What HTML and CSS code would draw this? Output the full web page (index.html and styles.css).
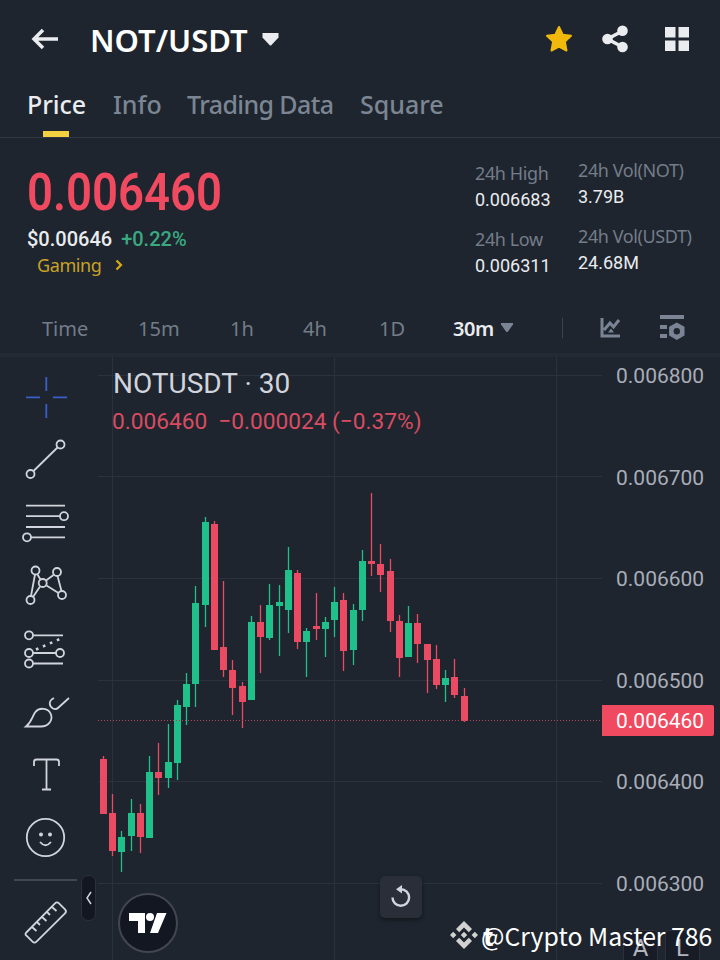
FILE: index.html
```html
<!DOCTYPE html>
<html lang="en">
<head>
  <meta charset="UTF-8">
  <meta name="viewport" content="width=device-width, initial-scale=1.0">
  <title>NOT/USDT</title>
  <link rel="stylesheet" href="styles.css">
</head>
<body>

  <header class="header">
    <svg class="back" width="28" height="22" viewBox="0 0 28 22"><path d="M12 2 3 11l9 9M3 11h24" /></svg>
    <h1 class="pair"><span class="fit">NOT/USDT</span></h1>
    <svg class="caret" width="17" height="13" viewBox="0 0 17 13"><path d="M.5 0h16v4.500L9.500 12q-1 1-2 0L.5 4.500z" /></svg>
    <div class="actions">
      <svg width="28" height="28" viewBox="0 0 28 28"><path class="star" d="m14 2 3.700 7.700 8.300 1.100-6.100 5.800 1.600 8.900-7.500-4-7.500 4 1.600-8.900L2 10.800l8.300-1.100z" /></svg>
      <svg width="28" height="28" viewBox="0 0 28 28"><path class="share-line" d="M21.500 6 6.500 14l15 8" /><g class="solid"><circle cx="6.500" cy="14" r="5.300" /><circle cx="21.500" cy="5.800" r="5.300" /><circle cx="21.500" cy="22" r="5.300" /></g></svg>
      <svg width="24" height="24" viewBox="0 0 24 24"><path class="solid" d="M0 0h10.500v10.500H0zM13.500 0H24v10.500H13.500zM0 13.500h10.500V24H0zM13.500 13.500H24V24H13.500z" /></svg>
    </div>
  </header>

  <nav class="tabs">
    <a class="tab active">Price</a>
    <a class="tab info">Info</a>
    <a class="tab data">Trading Data</a>
    <a class="tab square">Square</a>
  </nav>

  <section class="summary">
    <div class="quote">
      <div class="last"><span class="fit">0.006460</span></div>
      <div class="fiat"><span class="usd">$0.00646</span><span class="change">+0.22%</span></div>
      <div class="tag">Gaming
        <svg width="8" height="12" viewBox="0 0 8 12"><path d="m1.500 1.500 4.500 4.500-4.500 4.500" /></svg>
      </div>
    </div>
    <dl class="stats prices">
      <dt>24h High</dt>
      <dd>0.006683</dd>
      <dt>24h Low</dt>
      <dd>0.006311</dd>
    </dl>
    <dl class="stats volumes">
      <dt>24h Vol(NOT)</dt>
      <dd>3.79B</dd>
      <dt>24h Vol(USDT)</dt>
      <dd>24.68M</dd>
    </dl>
  </section>

  <div class="intervals">
    <span class="time">Time</span>
    <span class="m15">15m</span>
    <span class="h1">1h</span>
    <span class="h4">4h</span>
    <span class="d1">1D</span>
    <span class="m30">30m</span>
    <svg class="drop" width="12" height="10" viewBox="0 0 12 10"><path d="M0 0h12v1.500L7 8.500q-1 1-2 0L0 1.500z" /></svg>
    <i class="divider"></i>
    <svg class="indicator" width="20" height="20" viewBox="0 0 20 20"><path d="M2 0v18h18M4 12l6-7 3.500 4L19 2" /><path d="m8 14.500 3-4 3 4z" class="fill" /></svg>
    <svg class="settings" width="26" height="28" viewBox="0 0 26 28"><path class="fill" fill-rule="evenodd" d="M0 1h24v4H0zM0 11h7v4H0zM0 20h7v4H0zM16.800 8.500l7.700 4.300v8.800l-7.700 4.400-7.700-4.400v-8.800zM16.800 14a3.200 3.200 0 1 0 0 6.400 3.200 3.200 0 1 0 0-6.400z" /></svg>
  </div>

  <main class="chart">
    <aside class="tools">
      <svg class="cross" viewBox="0 366 98 63"><path d="M46.300 377v14M46.300 404v14M26 397.300h14M53 397.300h14" /></svg>
      <svg viewBox="0 429 98 63"><path d="m33.500 471 24-23.500" /><circle cx="30.500" cy="474" r="4" /><circle cx="60.500" cy="444.500" r="4" /></svg>
      <svg viewBox="0 492 98 63"><path d="M26 505.700h39M26 516.200h34M26 527h39M31 537.300h34" /><circle cx="64" cy="516.200" r="4" /><circle cx="27" cy="537.300" r="4" /></svg>
      <svg viewBox="0 555 98 63"><path d="m31 596 4-21.500M37.500 574.500l3 5M33 597l7-10.500M46 580.500l7.500-5.500M46.500 585.500l12 7.500M57.500 576l4 15" /><circle cx="35.500" cy="570.500" r="4" /><circle cx="57" cy="572" r="4" /><circle cx="42.700" cy="583" r="4" /><circle cx="62" cy="595" r="4" /><circle cx="30.500" cy="600" r="4" /></svg>
      <svg viewBox="0 618 98 63"><path d="M33 635.300h30M33 653h23M33 663.500h30" /><path class="dots" d="m36 649.500 25-11" /><circle cx="29" cy="635.300" r="4" /><circle cx="29" cy="653" r="4" /><circle cx="60" cy="653" r="4" /><circle cx="29" cy="663.500" r="4" /></svg>
      <svg viewBox="0 681 98 63"><path d="M26 726.500c5.500-4.500 6-9.500 9-14 4-5.500 13.500-5 16 2 2 6.500-3 12-10 12zM54 698c-6 3-5 8-1 10.500q3 1.500 5.500-1L69 698" /></svg>
      <svg viewBox="0 744 98 63"><path d="M34 766v-4q0-2.500 2.500-2.500h20q2.500 0 2.500 2.500v4M46.500 759.500v30M42 789.500h9" /></svg>
      <svg viewBox="0 807 98 63"><circle cx="45.500" cy="837.500" r="18.700" /><path d="M40 842q5.500 6.500 11 0" /><path class="fill" d="M39 834.500a2 2 0 1 0 4 0 2 2 0 1 0-4 0zM48 834.500a2 2 0 1 0 4 0 2 2 0 1 0-4 0z" /></svg>
      <hr>
      <svg viewBox="0 891 98 63"><path d="M26.300 932.500 55 903.300q2-2 4 0l6 6q2 2 0 4L36.500 941.700q-2 2-4 0l-6-6q-2-1.500-.2-3.200zM32 927l4.500 4M37 922l3 3M42 917l4.500 4M47 912l3 3M52 907l4.500 4" /></svg>
    </aside>

    <div class="plot">
      <svg viewBox="98 357 504 603">
        <path class="grid" d="M112.500 357v603M334.500 357v603M556.500 357v603M98 375.500h504M98 476.500h504M98 578.500h504M98 680.500h504M98 781.500h504M98 883.500h504" />
        <path class="wick down" d="M103.500 756V759M112.500 794V856M140.500 804V853M158.500 743V795M214.500 521V650M223.500 581V677M232.500 660V715M242.500 682V728M260.500 605V673M297.500 570V649M316.500 593V640M343.500 593V671M371.500 493V576M380.500 544V592M390.500 559V632M399.500 615V677M417.500 614V663M427.500 644V693M436.500 645V689M454.500 659V698M464.500 688V722" />
        <path class="wick up" d="M121.500 831V872M131.500 799V851M149.500 756V838M168.500 724V788M177.500 700V780M186.500 673V725M195.500 586V707M205.500 517V627M251.500 616V700M269.500 584V640M279.500 585V656M288.500 547V633M306.500 628V677M325.500 617V657M334.500 587V637M353.500 604V665M362.500 550V621M408.500 606V657M445.500 670V702" />
        <path class="body down" d="M103.500 759V814M112.500 813V851M140.500 813V837M158.500 772V778M214.500 524V650M223.500 647V670M232.500 670V688M242.500 686V702M260.500 622V637M297.500 573V642M316.500 626V629M343.500 600V651M371.500 561V564M380.500 564V575M390.500 571V621M399.500 621V658M417.500 623V644M427.500 644V660M436.500 659V685M454.500 677V695M464.500 696V721" />
        <path class="body up" d="M121.500 837V852M131.500 813V836M149.500 772V838M168.500 762V778M177.500 705V763M186.500 684V707M195.500 603V684M205.500 522V605M251.500 622V700M269.500 605V638M279.500 602V606M288.500 570V610M306.500 631V642M325.500 622V629M334.500 602V620M353.500 610V650M362.500 561V610M408.500 623V657M445.500 678V685" />
        <path class="last-line" d="M98 720.500h504" />
      </svg>
      <div class="legend">
        <div class="symbol">NOTUSDT · 30</div>
        <div class="move"><span>0.006460</span><span>−0.000024 (−0.37%)</span></div>
      </div>
    </div>

    <ul class="axis">
      <li>0.006800</li>
      <li>0.006700</li>
      <li>0.006600</li>
      <li>0.006500</li>
      <li>0.006400</li>
      <li>0.006300</li>
    </ul>
    <div class="price-tag">0.006460</div>

    <div class="collapse"><svg width="6" height="14" viewBox="0 0 6 14"><path d="M5 1 1 7l4 6" /></svg></div>
    <div class="logo"><svg width="40" height="22" viewBox="0 0 40 22"><path d="M1 1h16v20h-7V9H1zM29 1h9.500L30 21h-8z" /><circle cx="22" cy="5" r="4" /></svg></div>
    <div class="reset"><svg width="22" height="24" viewBox="0 0 22 24"><path d="M2.500 12.500a8.300 8.300 0 1 0 8.300-8.300" /><path class="fill" d="M12 0v8.500L6 4.200z" /></svg></div>
    <div class="scale"><span>A</span><span>L</span></div>
    <div class="watermark">
      <svg width="28" height="28" viewBox="0 0 28 28"><path d="M14 0l8 8-3.200 3.200L14 6.400l-4.800 4.800L6 8zM14 28l8-8-3.200-3.200-4.800 4.800-4.800-4.800L6 20zM14 10.800l3.200 3.200-3.200 3.200-3.200-3.200zM3.200 10.800 6.400 14l-3.200 3.200L0 14zM24.800 10.800 28 14l-3.200 3.200-3.200-3.200z" /></svg>
      <span class="mark">t</span>
      <span class="handle">@Crypto Master 786</span>
    </div>
  </main>

</body>
</html>
```
FILE: styles.css
```css
* {
  box-sizing: border-box;
}

body {
  margin: 0;
  width: 720px;
  height: 960px;
  overflow: hidden;
  display: flex;
  flex-direction: column;
  background-color: #1e252e;
  color: #eaecef;
  font-family: "Noto Sans", sans-serif;
}

svg {
  display: block;
  flex: none;
  fill: none;
}

.fit {
  display: inline-block;
  transform-origin: left center;
}

.header,
.tabs,
.summary,
.intervals,
.chart {
  flex: none;
}

.header {
  height: 78px;
  display: flex;
  align-items: center;
  padding: 0 31px;
}

.back {
  stroke: #eaecef;
  stroke-width: 3.5;
}

.pair {
  margin: 1px 0 0 31px;
  width: 172px;
  font-size: 31px;
  font-weight: 600;
  white-space: nowrap;
  color: #fff;
}

.caret,
.solid {
  fill: #eaecef;
}

.actions {
  margin-left: auto;
  display: flex;
  align-items: center;
}

.actions svg + svg {
  margin-left: 28px;
}

.actions svg:last-child {
  margin-left: 36px;
}

.star {
  fill: #f0b90b;
  stroke: #f0b90b;
  stroke-width: 2;
  stroke-linejoin: round;
}

.share-line {
  stroke: #eaecef;
  stroke-width: 3.5;
}

.tabs {
  height: 60px;
  display: flex;
  padding-left: 27px;
  border-bottom: 1px solid #323842;
  font-size: 25px;
  font-weight: 500;
  line-height: 53px;
  white-space: nowrap;
}

.tab {
  position: relative;
  color: #7c8593;
}

.tab.active {
  width: 86px;
  color: #eaecef;
}

.tab.info {
  width: 74px;
}

.tab.data {
  width: 173px;
  letter-spacing: -0.6px;
}

.tab.active::after {
  content: "";
  position: absolute;
  left: 16px;
  bottom: 0;
  width: 26px;
  height: 6px;
  background-color: #f2d03f;
}

.summary {
  height: 162px;
  display: flex;
  padding-left: 27px;
}

.quote {
  width: 448px;
  padding-top: 25px;
}

.last {
  height: 60px;
  font: 600 51px/60px Roboto, sans-serif;
  color: #f04a60;
}

.last .fit {
  transform: scaleX(0.893);
}

.fiat {
  display: flex;
  gap: 9px;
  font: 500 20px/32px Roboto, sans-serif;
}

.change {
  color: #3aa981;
}

.tag {
  display: flex;
  align-items: center;
  gap: 14px;
  padding-left: 10px;
  font-size: 18px;
  line-height: 20px;
  letter-spacing: -0.4px;
  color: #c9a227;
}

.tag svg {
  stroke: #d9ab17;
  stroke-width: 2.2;
}

.stats {
  margin: 0;
  white-space: nowrap;
}

.prices {
  width: 103px;
  padding-top: 23px;
}

.volumes {
  padding-top: 20px;
}

.stats dt {
  height: 26px;
  font-size: 18px;
  line-height: 24px;
  letter-spacing: -0.4px;
  color: #747c89;
}

.stats dd {
  margin: 0;
  height: 40px;
  font: 400 18px/26px Roboto, sans-serif;
  color: #eaecef;
}

.intervals {
  height: 57px;
  display: flex;
  align-items: center;
  padding: 3px 0 0 42px;
  border-bottom: 4px solid #242a34;
  font-size: 20px;
  color: #747c89;
}

.time {
  width: 96px;
}

.m15 {
  width: 92px;
}

.h1 {
  width: 73px;
}

.h4 {
  width: 76px;
}

.d1 {
  width: 74px;
}

.m30 {
  width: 48px;
  font-weight: 600;
  letter-spacing: -0.5px;
  color: #eaecef;
}

.drop,
.fill {
  fill: #7b8494;
}

.divider {
  width: 1px;
  height: 20px;
  margin-left: 49px;
  background-color: #3d4450;
}

.indicator {
  margin-left: 37px;
  stroke: #7b8494;
  stroke-width: 3;
}

.indicator .fill {
  stroke: none;
}

.settings {
  margin-left: 40px;
}

.chart {
  position: relative;
  height: 603px;
  display: flex;
}

.tools {
  width: 98px;
  padding-top: 9px;
}

.tools svg {
  width: 98px;
  height: 63px;
  stroke: #d1d4dc;
  stroke-width: 1.8;
}

.tools .cross {
  stroke: #3a5fc8;
}

.tools .dots {
  stroke-width: 2.6;
  stroke-dasharray: 2.6 5;
}

.tools .fill {
  fill: #d1d4dc;
  stroke: none;
}

.tools hr {
  margin: 9px 21px 10px 14px;
  border: 0;
  height: 2px;
  background-color: #434651;
}

.plot {
  position: relative;
  width: 504px;
}

.plot svg {
  width: 504px;
  height: 603px;
}

.grid {
  stroke: #2b323b;
}

.wick {
  stroke-width: 1.3;
}

.body {
  stroke-width: 7;
}

.up {
  stroke: #1fc08a;
}

.down {
  stroke: #ea4b62;
}

.last-line {
  stroke: #b0485a;
  stroke-dasharray: 1 2;
}

.legend {
  position: absolute;
  left: 14px;
  top: 9px;
  font-family: Roboto, sans-serif;
  white-space: nowrap;
}

.symbol {
  padding-left: 1px;
  font-size: 28px;
  line-height: 36px;
  color: #d1d4dc;
}

.move {
  display: flex;
  gap: 11px;
  font-size: 22.7px;
  line-height: 40px;
  color: #d94c61;
}

.axis {
  margin: 0;
  padding: 9px 0 0 14px;
  list-style: none;
  font: 21px/20px Roboto, sans-serif;
  color: #a9adb8;
}

.axis li {
  height: 101.6px;
}

.axis li:last-child {
  height: 20px;
}

.price-tag {
  position: absolute;
  left: 602px;
  top: 348px;
  width: 112px;
  height: 31px;
  padding-left: 14px;
  border-radius: 0 2px 2px 0;
  background-color: #f04a60;
  font: 21px/32px Roboto, sans-serif;
  color: #fff;
}

.collapse {
  position: absolute;
  left: 81px;
  top: 518px;
  width: 15px;
  height: 46px;
  display: flex;
  align-items: center;
  justify-content: center;
  border: 1px solid #2c303b;
  border-radius: 7px;
  background-color: #131722;
}

.collapse svg {
  stroke: #d1d4dc;
  stroke-width: 1.5;
}

.logo {
  position: absolute;
  left: 118px;
  top: 536px;
  width: 60px;
  height: 60px;
  display: flex;
  align-items: center;
  justify-content: center;
  border: 2px solid #434651;
  border-radius: 50%;
  background-color: #131722;
}

.logo svg {
  fill: #fff;
}

.reset {
  position: absolute;
  left: 380px;
  top: 519px;
  width: 42px;
  height: 42px;
  display: flex;
  align-items: center;
  justify-content: center;
  border-radius: 5px;
  background-color: #2a2e39;
  box-shadow: 0 2px 4px rgba(0, 0, 0, 0.4);
}

.reset svg {
  stroke: #d1d4dc;
  stroke-width: 2.4;
}

.reset .fill {
  fill: #d1d4dc;
  stroke: none;
}

.scale {
  position: absolute;
  left: 623px;
  top: 573px;
  display: flex;
  gap: 7px;
}

.scale span {
  width: 35px;
  height: 30px;
  border: 1px solid #2c303b;
  border-bottom: 0;
  border-radius: 4px 4px 0 0;
  background-color: #171c26;
  font: 24px/34px Roboto, sans-serif;
  text-align: center;
  color: #b2b5be;
}

.watermark {
  position: absolute;
  left: 450px;
  top: 561px;
  height: 34px;
  display: flex;
  align-items: center;
  font: 24.8px/34px "Noto Sans CJK SC", sans-serif;
  color: #fff;
  white-space: nowrap;
}

.watermark svg {
  fill: #d2d2d2;
}

.mark {
  width: 0;
  margin-left: 5px;
  font-weight: 700;
}

.handle {
  margin-left: -2px;
}
```
